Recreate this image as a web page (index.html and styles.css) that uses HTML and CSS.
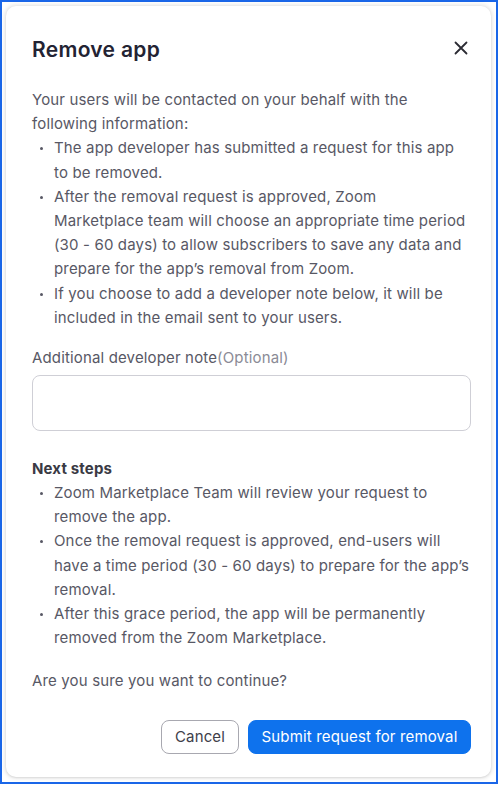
FILE: index.html
```html
<!DOCTYPE html>
<html lang="en">
<head>
<meta charset="utf-8">
<title>Remove app</title>
<link rel="stylesheet" href="styles.css">
</head>
<body>
<div class="frame">
  <div class="modal">
    <div class="header">
      <h1 class="title">Remove app</h1>
      <button class="close" aria-label="Close">
        <svg width="14" height="14" viewBox="0 0 14 14"><path d="M1.5 1.5 L12.5 12.5 M12.5 1.5 L1.5 12.5" stroke="#2b2b33" stroke-width="1.8" stroke-linecap="round" fill="none"/></svg>
      </button>
    </div>
    <p class="text">Your users will be contacted on your behalf with the following information:</p>
    <ul class="list list-info">
      <li>The app developer has submitted a request for this app to be removed.</li>
      <li>After the removal request is approved, Zoom Marketplace team will choose an appropriate time period (30 - 60 days) to allow subscribers to save any data and prepare for the app’s removal from Zoom.</li>
      <li>If you choose to add a developer note below, it will be included in the email sent to your users.</li>
    </ul>
    <label class="label">Additional developer note<span class="optional">(Optional)</span></label>
    <textarea class="note"></textarea>
    <h2 class="subtitle">Next steps</h2>
    <ul class="list">
      <li>Zoom Marketplace Team will review your request to remove the app.</li>
      <li>Once the removal request is approved, end-users will have a time period (30 - 60 days) to prepare for the app’s removal.</li>
      <li>After this grace period, the app will be permanently removed from the Zoom Marketplace.</li>
    </ul>
    <p class="text confirm">Are you sure you want to continue?</p>
    <div class="actions">
      <button class="btn btn-secondary">Cancel</button>
      <button class="btn btn-primary">Submit request for removal</button>
    </div>
  </div>
</div>
</body>
</html>
```
FILE: styles.css
```css
* { box-sizing: border-box; }
html, body { margin: 0; padding: 0; background: #ffffff; }
body { font-family: Inter, "Noto Sans", sans-serif; color: #585865; }
.frame {
  width: 498px;
  height: 784px;
  border: 2px solid #1a66e8;
  padding: 4px 5px 5px 4px;
}
.modal {
  background: #fff;
  border-radius: 10px;
  box-shadow: 0 0 4px 1px rgba(0,0,0,0.12), 0 1px 2px rgba(0,0,0,0.08);
  height: 100%;
  padding: 30px 20px 0 26px;
}
.header { display: flex; align-items: center; justify-content: space-between; height: 28px; }
.title { margin: 0; font-size: 21px; font-weight: 600; color: #232333; line-height: 28px; letter-spacing: 0.3px; }
.close { background: none; border: 0; padding: 0; width: 20px; height: 20px; display: flex; align-items: center; justify-content: center; margin-right: 0; margin-top: -4px; }
.text { margin: 24px 0 0; font-size: 15px; line-height: 24.2px; letter-spacing: 0.15px; }
.list { list-style: none; margin: 0; padding: 0 0 0 22px; font-size: 15px; line-height: 24.2px; letter-spacing: 0.15px; }
.list-info { padding-right: 4px; }
.list li { position: relative; }
.list li::before { content: ""; position: absolute; left: -14px; top: 11px; width: 3px; height: 3px; border-radius: 50%; background: #585865; }
.label { display: block; margin-top: 16px; font-size: 15px; line-height: 24px; letter-spacing: 0.15px; color: #585865; }
.optional { color: #8b8b96; }
.note { display: block; width: 100%; height: 56px; margin-top: 5px; border: 1px solid #cfcfd6; border-radius: 8px; resize: none; font: inherit; }
.subtitle { margin: 26px 0 0; font-size: 15px; font-weight: 700; line-height: 24px; color: #3a3a44; letter-spacing: 0.15px; }
.confirm { margin-top: 19px; }
.actions { display: flex; justify-content: flex-end; gap: 9px; margin-top: 26px; }
.btn { height: 34px; border-radius: 8px; font-family: Inter, "Noto Sans", sans-serif; font-size: 15px; padding: 0 10px; letter-spacing: 0.15px; }
.btn-secondary { background: #fff; border: 1px solid #a8a8b0; color: #40404a; width: 78px; }
.btn-primary { background: #0e72ed; border: 1px solid #0e72ed; color: #fff; width: 223px; }
```
